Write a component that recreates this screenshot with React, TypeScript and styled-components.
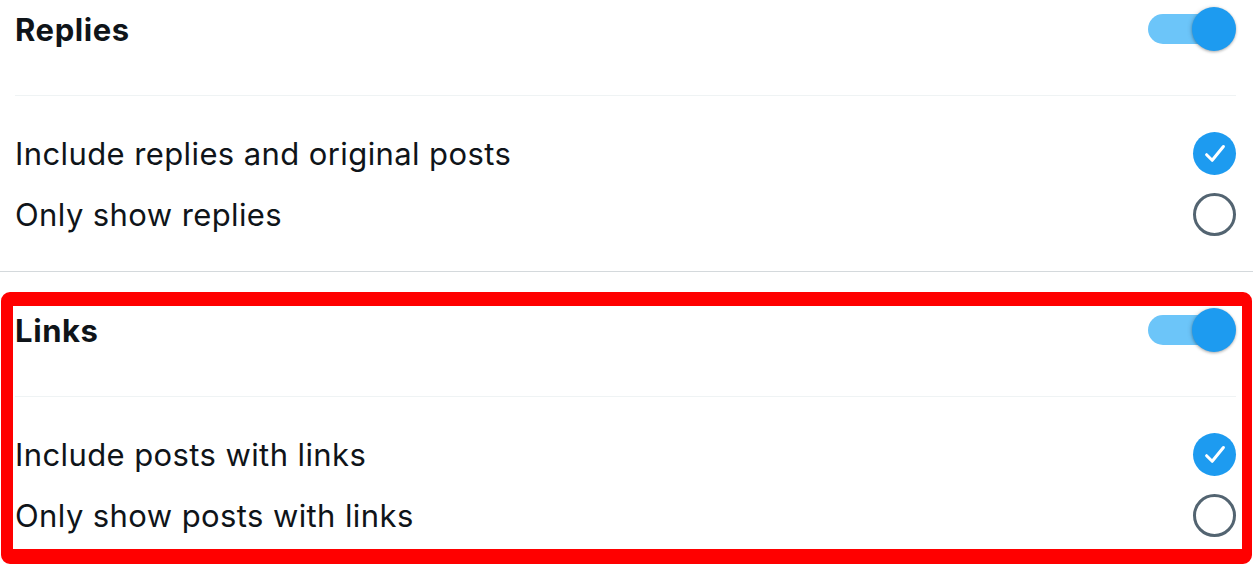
import * as React from "react";
import styled, { createGlobalStyle } from "styled-components";

const GlobalStyle = createGlobalStyle`
  html, body {
    margin: 0;
    padding: 0;
    background: #ffffff;
    overflow: hidden;
  }
  body {
    font-family: Inter, "Noto Sans", "Liberation Sans", sans-serif;
    color: #0f1419;
  }
`;

const Page = styled.div`
  width: 1253px;
  height: 572px;
  overflow: hidden;
  background: #ffffff;
`;

const Section = styled.section<{ $top: number; $highlight?: boolean }>`
  position: relative;
  padding-top: ${(p) => p.$top}px;
  padding-bottom: 26px;
  border-bottom: 1px solid #d4d9dc;
  ${(p) =>
    p.$highlight &&
    `
    &::after {
      content: "";
      position: absolute;
      left: 1px;
      right: 1px;
      top: 20px;
      height: 272px;
      border: solid #ff0000;
      border-width: 14px 10px 15px 12px;
      border-radius: 9px;
      box-sizing: border-box;
      pointer-events: none;
    }
  `}
`;

const Header = styled.div`
  display: flex;
  align-items: center;
  justify-content: space-between;
  height: 44px;
  margin: 0 17px 44px 15px;
`;

const Title = styled.h2`
  margin: 0;
  font-size: 31px;
  font-weight: 700;
  letter-spacing: 0.6px;
`;

const Divider = styled.div`
  height: 1px;
  margin: 0 17px 27px 15px;
  background: #eff3f4;
`;

const Row = styled.label`
  display: flex;
  align-items: center;
  justify-content: space-between;
  height: 61px;
  padding: 0 17px 0 15px;
  font-size: 31px;
  font-weight: 400;
  letter-spacing: 0.4px;
  cursor: pointer;
`;

const Toggle = styled.div`
  position: relative;
  width: 88px;
  height: 44px;
  display: flex;
  align-items: center;
`;

const Track = styled.div`
  width: 81px;
  height: 30px;
  border-radius: 15px;
  background: #6cc5f9;
`;

const Knob = styled.div`
  position: absolute;
  right: 0;
  top: 0;
  width: 44px;
  height: 44px;
  border-radius: 50%;
  background: #1d9bf0;
  box-shadow: 0 1px 3px rgba(0, 0, 0, 0.3), -2px 0 4px rgba(0, 0, 0, 0.08);
`;

const Radio = styled.span<{ $checked: boolean }>`
  width: 43px;
  height: 43px;
  box-sizing: border-box;
  border-radius: 50%;
  display: flex;
  align-items: center;
  justify-content: center;
  background: ${(p) => (p.$checked ? "#1d9bf0" : "transparent")};
  border: ${(p) => (p.$checked ? "none" : "3px solid #536471")};
`;

const Check = () => (
  <svg width="28" height="28" viewBox="0 0 24 24" fill="none">
    <path d="M4.8 12.6 L9.6 17.4 L19.2 5.6" stroke="#ffffff" strokeWidth="2.6" strokeLinecap="round" strokeLinejoin="round" />
  </svg>
);

type Group = {
  title: string;
  options: string[];
  selected: number;
};

const groups: Group[] = [
  {
    title: "Replies",
    options: ["Include replies and original posts", "Only show replies"],
    selected: 0,
  },
  {
    title: "Links",
    options: ["Include posts with links", "Only show posts with links"],
    selected: 0,
  },
];

const FilterSection: React.FC<{ group: Group; top: number; highlight?: boolean }> = ({ group, top, highlight }) => {
  const [selected, setSelected] = React.useState(group.selected);
  return (
    <Section $top={top} $highlight={highlight}>
      <Header>
        <Title>{group.title}</Title>
        <Toggle>
          <Track />
          <Knob />
        </Toggle>
      </Header>
      <Divider />
      {group.options.map((option, i) => (
        <Row key={option} onClick={() => setSelected(i)}>
          <span>{option}</span>
          <Radio $checked={selected === i}>{selected === i && <Check />}</Radio>
        </Row>
      ))}
    </Section>
  );
};

const App: React.FC = () => (
  <Page>
    <GlobalStyle />
    <FilterSection group={groups[0]} top={7} />
    <FilterSection group={groups[1]} top={36} highlight />
  </Page>
);

export default App;
